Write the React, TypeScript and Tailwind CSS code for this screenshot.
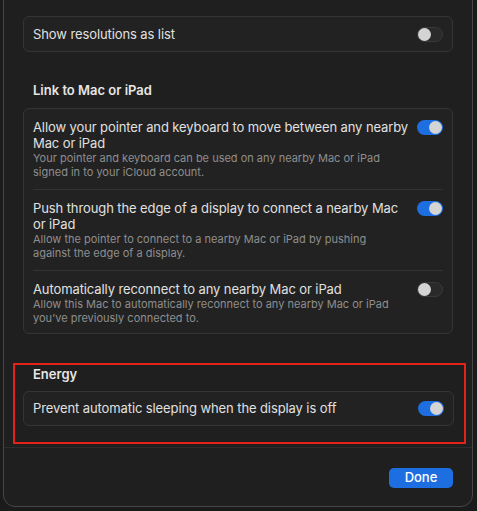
import React from "react";

function Toggle({ on }: { on: boolean }) {
  return on ? (
    <div className="flex h-[15px] w-[26px] shrink-0 items-center justify-end rounded-full bg-[#1d6ee0] pr-[1px]">
      <div className="h-[13px] w-[13px] rounded-full bg-[#d4d4d4]" />
    </div>
  ) : (
    <div className="flex h-[15px] w-[26px] shrink-0 items-center justify-start rounded-full border border-[#3a3a3a] bg-[#2a2a2a] pl-[0px]">
      <div className="h-[13px] w-[13px] rounded-full bg-[#d4d4d4]" />
    </div>
  );
}

function Row({
  title,
  desc,
  on,
  last,
}: {
  title: string;
  desc: string;
  on: boolean;
  last?: boolean;
}) {
  return (
    <div className={last ? "flex gap-[6px] pt-[10px] pb-[8px]" : "flex gap-[6px] border-b border-[#333333] pt-[10px] pb-[10px]"}>
      <div className="min-w-0 flex-1">
        <div className="text-[13px] leading-[16px] tracking-[-0.1px] text-[#e0e0e0]">{title}</div>
        <div className="pr-[8px] text-[11px] leading-[14px] text-[#8e8e8e]">{desc}</div>
      </div>
      <div className="pt-[1px]">
        <Toggle on={on} />
      </div>
    </div>
  );
}

export default function App() {
  return (
    <div
      className="h-[511px] w-[477px] overflow-hidden bg-[#1b1b1b]"
      style={{ fontFamily: "Inter, 'Noto Sans', sans-serif" }}
    >
      <div className="ml-[3px] mt-[-12px] flex h-[519px] w-[470px] flex-col rounded-[12px] border border-[#474747] bg-[#1f1f1f]">
        <div className="px-[19px] pt-[27px]">
          <div className="flex h-[36px] items-center justify-between rounded-[6px] border border-[#353535] bg-[#222222] px-[9px] pt-[1px]">
            <span className="text-[13px] tracking-[-0.1px] text-[#e0e0e0]">Show resolutions as list</span>
            <Toggle on={false} />
          </div>

          <div className="mt-[30px] px-[10px] text-[13px] font-semibold leading-[16px] text-[#e6e6e6]">
            Link to Mac or iPad
          </div>

          <div className="mt-[10px] rounded-[6px] border border-[#353535] bg-[#222222] px-[9px]">
            <Row
              title="Allow your pointer and keyboard to move between any nearby Mac or iPad"
              desc="Your pointer and keyboard can be used on any nearby Mac or iPad signed in to your iCloud account."
              on
            />
            <Row
              title="Push through the edge of a display to connect a nearby Mac or iPad"
              desc="Allow the pointer to connect to a nearby Mac or iPad by pushing against the edge of a display."
              on
            />
            <Row
              title="Automatically reconnect to any nearby Mac or iPad"
              desc="Allow this Mac to automatically reconnect to any nearby Mac or iPad you’ve previously connected to."
              on={false}
              last
            />
          </div>

          <div className="ml-[-10px] mr-[-13px] mt-[29px] border-2 border-[#e3231a] pb-[16px] pl-[8px] pr-[10px] pt-[1px]">
            <div className="px-[10px] text-[13px] font-semibold leading-[16px] text-[#e6e6e6]">Energy</div>
            <div className="mt-[9px] flex h-[35px] items-center justify-between rounded-[6px] border border-[#353535] bg-[#222222] px-[9px]">
              <span className="text-[13px] tracking-[-0.1px] text-[#e0e0e0]">Prevent automatic sleeping when the display is off</span>
              <Toggle on />
            </div>
          </div>
        </div>

        <div className="mt-[3px] border-t border-[#2c2c2c]" />

        <div className="flex justify-end px-[19px] pt-[20px]">
          <button className="flex h-[20px] w-[64px] items-center justify-center rounded-[5px] bg-[#1d6ee0] text-[13px] font-medium text-white">
            Done
          </button>
        </div>
      </div>
    </div>
  );
}
